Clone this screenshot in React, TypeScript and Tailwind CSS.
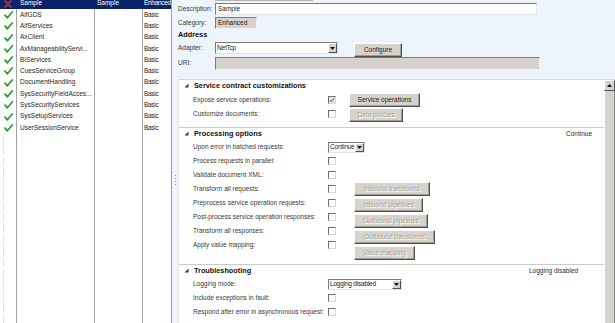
import React from "react";

const rows: string[] = [
  "AifGDS",
  "AifServices",
  "AxClient",
  "AxManageabilityServi...",
  "BIServices",
  "CuesServiceGroup",
  "DocumentHandling",
  "SysSecurityFieldAcces...",
  "SysSecurityServices",
  "SysSetupServices",
  "UserSessionService",
];

function CheckIcon() {
  return (
    <svg width="9" height="8" viewBox="0 0 9 8">
      <path d="M1 4.2 L3.4 6.8 L8.2 1" stroke="#2f9e35" strokeWidth="1.8" fill="none" strokeLinecap="round" strokeLinejoin="round" />
    </svg>
  );
}

function XIcon() {
  return (
    <svg width="8" height="8" viewBox="0 0 8 8">
      <path d="M1 1 L7 7 M7 1 L1 7" stroke="#e8262a" strokeWidth="1.6" fill="none" strokeLinecap="round" />
    </svg>
  );
}

function GridRow({ sel, name, sample, type }: { sel?: boolean; name: string; sample: string; type: string }) {
  const bc = sel ? "border-r-[#0a246a]" : "border-r-[#a4a4a4]";
  return (
    <div className={`flex h-[11.3px] shrink-0 ${sel ? "bg-[#0a246a] text-white" : "text-[#1e1e1e]"}`}>
      <div className={`w-[17px] h-full flex items-center justify-center border-r ${bc}`}>{sel ? <XIcon /> : <CheckIcon />}</div>
      <div className={`w-[78px] h-full flex items-center pl-[3px] whitespace-nowrap overflow-hidden border-r ${bc}`}>{name}</div>
      <div className={`w-[48px] h-full flex items-center pl-[2px] whitespace-nowrap overflow-hidden border-r ${bc}`}>{sample}</div>
      <div className="flex-1 h-full flex items-center pl-[1px] tracking-[-0.3px] whitespace-nowrap overflow-hidden">{type}</div>
    </div>
  );
}

function Checkbox({ checked }: { checked?: boolean }) {
  return (
    <div
      className={`w-[8px] h-[8px] shrink-0 border border-t-[#6e6e6e] border-l-[#6e6e6e] border-b-[#d8d8d8] border-r-[#d8d8d8] flex items-center justify-center ${
        checked ? "bg-[#e6e6e6]" : "bg-white"
      }`}
    >
      {checked ? (
        <svg width="6" height="6" viewBox="0 0 6 6">
          <path d="M0.8 3 L2.3 4.6 L5.2 1.2" stroke="#8a8a8a" strokeWidth="1.2" fill="none" />
        </svg>
      ) : null}
    </div>
  );
}

function Btn({ children, disabled, className }: { children: React.ReactNode; disabled?: boolean; className: string }) {
  return (
    <div
      className={`shrink-0 flex items-center justify-center bg-[#d6d3cc] border border-t-white border-l-white border-b-[#505050] border-r-[#505050] shadow-[inset_-1px_-1px_0_#a09c94] whitespace-nowrap ${
        disabled ? "text-[#a6a39c] [text-shadow:1px_1px_0_#ffffff]" : "text-[#1a1a1a]"
      } ${className}`}
    >
      {children}
    </div>
  );
}

function DropBtn() {
  return (
    <div className="w-[9px] h-full shrink-0 bg-[#d6d3cc] border border-t-white border-l-white border-b-[#505050] border-r-[#505050] flex items-center justify-center">
      <svg width="5" height="3" viewBox="0 0 5 3">
        <polygon points="0,0 5,0 2.5,3" fill="#111" />
      </svg>
    </div>
  );
}

function Select({ value, className }: { value: string; className: string }) {
  return (
    <div className={`shrink-0 flex bg-white border border-t-[#7a7a7a] border-l-[#7a7a7a] border-b-[#e2e2e2] border-r-[#e2e2e2] ${className}`}>
      <div className="flex-1 flex items-center pl-[1px] text-[#1a1a1a] whitespace-nowrap overflow-hidden tracking-[-0.2px]">{value}</div>
      <DropBtn />
    </div>
  );
}

function Tri() {
  return (
    <svg width="5" height="5" viewBox="0 0 5 5" className="shrink-0">
      <polygon points="4.5,0.5 4.5,4.5 0.5,4.5" fill="#3a3a3a" />
    </svg>
  );
}

function Header({ title, summary, w }: { title: string; summary?: string; w?: string }) {
  return (
    <div className="h-[12px] flex items-center shrink-0">
      <div className={`flex items-center pl-[5px] gap-[5px] ${w ?? ""}`}>
        <Tri />
        <span className="font-bold text-[7.3px] text-[#111]">{title}</span>
      </div>
      {summary ? <span className="text-[#2a2a2a]">{summary}</span> : null}
    </div>
  );
}

function LRow({ label, children }: { label: string; children?: React.ReactNode }) {
  return (
    <div className="h-[14px] flex items-center shrink-0">
      <div className="w-[149px] shrink-0 pl-[14px] whitespace-nowrap text-[#383838]">{label}</div>
      {children}
    </div>
  );
}

export default function App() {
  return (
    <div className="w-[615px] h-[323px] overflow-hidden flex font-['Liberation_Sans',Arial,sans-serif] text-[6.5px] leading-none bg-white">
      {/* Left grid */}
      <div className="w-[172px] h-full shrink-0 bg-white border-r border-r-[#9c9c9c] flex flex-col overflow-hidden">
        <div className="-mt-[2px] flex flex-col shrink-0">
          <GridRow sel name="Sample" sample="Sample" type="Enhanced" />
          {rows.map((r) => (
            <GridRow key={r} name={r} sample="" type="Basic" />
          ))}
        </div>
        <div className="flex-1 flex">
          <div className="w-[17px] h-full border-r border-r-[#a4a4a4] pl-[3px]">
            <div className="w-px h-full bg-[repeating-linear-gradient(to_bottom,#e6e2dc_0px,#e6e2dc_9px,transparent_9px,transparent_11.3px)]" />
          </div>
          <div className="w-[78px] h-full border-r border-r-[#a4a4a4]" />
          <div className="w-[48px] h-full border-r border-r-[#a4a4a4]" />
          <div className="flex-1" />
        </div>
      </div>

      {/* Right side */}
      <div className="flex-1 flex bg-[#eef4fc] min-w-0">
        {/* splitter */}
        <div className="w-[6px] shrink-0 flex flex-col items-center pt-[175px] gap-[2px]">
          <div className="w-px h-px bg-[#8d949c]" />
          <div className="w-px h-px bg-[#8d949c]" />
          <div className="w-px h-px bg-[#8d949c]" />
          <div className="w-px h-px bg-[#8d949c]" />
        </div>

        <div className="flex-1 flex flex-col min-w-0">
          {/* Top fields */}
          <div className="h-[79px] shrink-0 flex flex-col text-[#383838]">
            <div className="ml-[37px] w-[98px] h-px bg-[#b4b4b4]" />
            <div className="mt-[2px] h-[12px] flex items-center">
              <div className="w-[37px] shrink-0">Description:</div>
              <div className="w-[322px] h-full bg-white border border-t-[#7a7a7a] border-l-[#7a7a7a] border-b-[#e6e6e6] border-r-[#e6e6e6] flex items-center pl-[2px] text-[#1a1a1a]">
                Sample
              </div>
            </div>
            <div className="mt-[2px] h-[12px] flex items-center">
              <div className="w-[37px] shrink-0">Category:</div>
              <div className="w-[42px] h-full bg-[#d6d3cc] border border-t-[#7a7a7a] border-l-[#7a7a7a] border-b-[#f2f2f2] border-r-[#f2f2f2] flex items-center pl-[2px] text-[#1a1a1a]">
                Enhanced
              </div>
            </div>
            <div className="h-[12px] flex items-center font-bold text-[7.3px] text-[#111]">Address</div>
            <div className="mt-[1px] h-[15px] flex items-start">
              <div className="w-[37px] h-[12px] shrink-0 flex items-center">Adapter:</div>
              <Select value="NetTcp" className="w-[123px] h-[12px]" />
              <Btn className="ml-[16px] mt-[1px] w-[48px] h-[14px]">Configure</Btn>
            </div>
            <div className="h-[13px] flex items-center">
              <div className="w-[37px] shrink-0">URI:</div>
              <div className="w-[325px] h-full bg-[#d6d3cc] border border-t-[#7a7a7a] border-l-[#7a7a7a] border-b-[#f2f2f2] border-r-[#f2f2f2]" />
            </div>
          </div>

          {/* Scroll panel */}
          <div className="flex-1 flex bg-white border-t border-t-[#d3dae3] min-h-0">
            <div className="flex-1 flex flex-col border-l border-l-[#dfe5ec] overflow-hidden min-w-0">
              {/* Section 1 */}
              <div className="h-[48px] shrink-0 flex flex-col border-b border-b-[#cbcbcb]">
                <Header title="Service contract customizations" />
                <div className="mt-[1px]" />
                <LRow label="Expose service operations:">
                  <Checkbox checked />
                  <Btn className="ml-[13px] w-[71px] h-[14px]">Service operations</Btn>
                </LRow>
                <LRow label="Customize documents:">
                  <Checkbox />
                  <Btn disabled className="ml-[13px] mt-[2px] w-[54px] h-[14px]">Data policies</Btn>
                </LRow>
              </div>

              {/* Section 2 */}
              <div className="h-[137px] shrink-0 flex flex-col border-b border-b-[#cbcbcb]">
                <Header title="Processing options" summary="Continue" w="w-[387px]" />
                <div className="flex">
                  <div className="flex flex-col w-[157px] shrink-0">
                    <LRow label="Upon error in batched requests:">
                      <Select value="Continue" className="w-[37px] h-[11px]" />
                    </LRow>
                    <LRow label="Process requests in parallel:">
                      <Checkbox />
                    </LRow>
                    <LRow label="Validate document XML:">
                      <Checkbox />
                    </LRow>
                    <LRow label="Transform all requests:">
                      <Checkbox />
                    </LRow>
                    <LRow label="Preprocess service operation requests:">
                      <Checkbox />
                    </LRow>
                    <LRow label="Post-process service operation responses:">
                      <Checkbox />
                    </LRow>
                    <LRow label="Transform all responses:">
                      <Checkbox />
                    </LRow>
                    <LRow label="Apply value mapping:">
                      <Checkbox />
                    </LRow>
                  </div>
                  <div className="ml-[18px] mt-[42px] flex flex-col gap-[2px]">
                    <Btn disabled className="w-[76px] h-[14px]">Inbound transforms</Btn>
                    <Btn disabled className="w-[69px] h-[14px]">Inbound pipelines</Btn>
                    <Btn disabled className="w-[74px] h-[14px]">Outbound pipelines</Btn>
                    <Btn disabled className="w-[81px] h-[14px]">Outbound transforms</Btn>
                    <Btn disabled className="w-[61px] h-[14px]">Value mapping</Btn>
                  </div>
                </div>
              </div>

              {/* Section 3 */}
              <div className="shrink-0 flex flex-col">
                <Header title="Troubleshooting" summary="Logging disabled" w="w-[350px]" />
                <LRow label="Logging mode:">
                  <Select value="Logging disabled" className="w-[74px] h-[11px]" />
                </LRow>
                <LRow label="Include exceptions in fault:">
                  <Checkbox />
                </LRow>
                <LRow label="Respond after error in asynchronous request:">
                  <Checkbox />
                </LRow>
              </div>
            </div>

            {/* Scrollbar */}
            <div className="w-[11px] shrink-0 flex flex-col bg-[#e8e6e1]">
              <div className="h-[11px] shrink-0 bg-[#d6d3cc] border border-t-white border-l-white border-b-[#505050] border-r-[#505050] flex items-center justify-center">
                <svg width="5" height="3" viewBox="0 0 5 3">
                  <polygon points="0,3 5,3 2.5,0" fill="#111" />
                </svg>
              </div>
              <div className="flex-1 bg-[#d6d3cc] border-l border-l-white border-r border-r-[#8a8a8a]" />
            </div>
          </div>
        </div>
      </div>
    </div>
  );
}
